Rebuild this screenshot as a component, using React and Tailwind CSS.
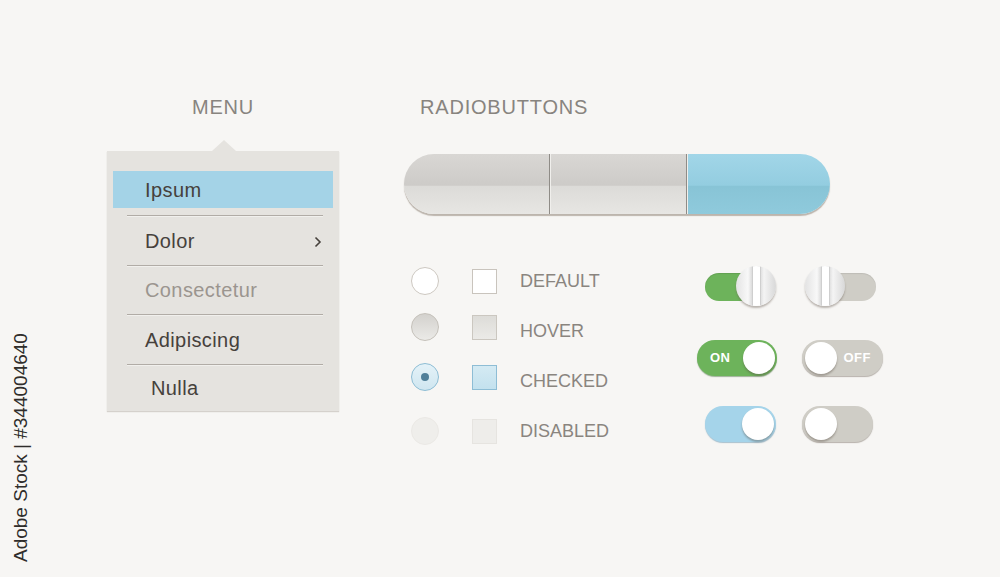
import React from 'react';

const font = { fontFamily: '"Liberation Sans", Arial, sans-serif' };

const menuItems = [
  { label: 'Dolor', arrow: true },
  { label: 'Consectetur', muted: true },
  { label: 'Adipiscing' },
  { label: 'Nulla', last: true },
];

const Separator = () => (
  <div className="ml-[20px] mr-[16px]">
    <div className="h-px bg-[#b1aca6]" />
    <div className="h-px bg-[#f1f0ed]" />
  </div>
);

const Menu = () => (
  <div className="w-[232px] shrink-0">
    <div className="h-[24px] text-center text-[20px] leading-[24px] tracking-[0.8px] text-[#88847f]">MENU</div>
    {/* little pointer on top of the dropdown */}
    <div className="mt-[21px] flex justify-center pl-[1px]">
      <div className="h-0 w-0 border-x-[12px] border-b-[11px] border-x-transparent border-b-[#e5e3df]" />
    </div>
    <div className="bg-[#e5e3df] px-[6px] pt-[20px] shadow-[0_1px_1px_rgba(150,140,130,0.35)]">
      <div className="flex h-[37px] items-center bg-[#a4d3e7] pl-[32px] text-[20px] tracking-[0.4px] text-[#46413c]">Ipsum</div>
      <div className="h-[7px]" />
      <div className="-mx-[6px]">
        {menuItems.map((item) => (
          <div key={item.label}>
            <Separator />
            <div
              className={`flex items-center justify-between pr-[17px] text-[20px] tracking-[0.4px] ${
                item.last ? 'h-[45px] pl-[44px]' : 'h-[47.5px] pl-[38px]'
              } ${item.muted ? 'text-[#9b958f]' : 'text-[#46413c]'}`}
            >
              <span>{item.label}</span>
              {item.arrow && (
                <svg width="8" height="12" viewBox="0 0 8 12" className="mt-[2px]">
                  <polyline points="1.5,1.5 6,6 1.5,10.5" fill="none" stroke="#46413c" strokeWidth="1.6" />
                </svg>
              )}
            </div>
          </div>
        ))}
      </div>
    </div>
  </div>
);

const SegmentedBar = () => (
  <div className="flex h-[60px] w-[426px] overflow-hidden rounded-full shadow-[0_2px_1px_rgba(140,128,115,0.55)]">
    <div className="w-[145px] bg-[linear-gradient(to_bottom,#d9d7d4_0%,#cdcbc8_52%,#dcdbd8_54%,#e7e6e3_100%)]" />
    <div className="w-px bg-[#8f8c87]" />
    <div className="w-px bg-[#f0efec]" />
    <div className="w-[135px] bg-[linear-gradient(to_bottom,#d9d7d4_0%,#cdcbc8_52%,#dcdbd8_54%,#e7e6e3_100%)]" />
    <div className="w-px bg-[#8f8c87]" />
    <div className="w-px bg-[#f0efec]" />
    <div className="flex-1 bg-[linear-gradient(to_bottom,#a2d6e8_0%,#93cde0_52%,#88c4d6_54%,#8fcadc_100%)]" />
  </div>
);

const radioStyles = {
  default: 'bg-white border border-[#cdc8c1]',
  hover: 'bg-[linear-gradient(to_bottom,#d3d1cd,#ebeae7)] border border-[#c5c1ba]',
  checked: 'bg-[linear-gradient(to_bottom,#e4f2f8,#cfe6f0)] border border-[#8dbdd4]',
  disabled: 'bg-[#efeeeb] border border-[#ebe9e5]',
};

const boxStyles = {
  default: 'bg-white border border-[#c9c4bd]',
  hover: 'bg-[linear-gradient(to_bottom,#dddcd8,#ebeae7)] border border-[#cbc7c0]',
  checked: 'bg-[linear-gradient(to_bottom,#d4eaf3,#c3e1ee)] border border-[#8ebdd5]',
  disabled: 'bg-[#eeedea] border border-[#e6e4e0]',
};

const states = [
  { key: 'default', label: 'DEFAULT', shift: '' },
  { key: 'hover', label: 'HOVER', shift: '-mt-[8px]' },
  { key: 'checked', label: 'CHECKED', shift: '-mt-[8px]' },
  { key: 'disabled', label: 'DISABLED', shift: '' },
];

const StateRows = () => (
  <div className="ml-[7px] w-[286px] shrink-0">
    {states.map((s) => (
      <div key={s.key} className="flex h-[50px] items-center">
        <div className={`flex items-center ${s.shift}`}>
          <div className={`flex h-[28px] w-[28px] items-center justify-center rounded-full ${radioStyles[s.key]}`}>
            {s.key === 'checked' && <div className="h-[8px] w-[8px] rounded-full bg-[#4f7f99]" />}
          </div>
          <div className={`ml-[33px] h-[25px] w-[25px] ${boxStyles[s.key]}`} />
        </div>
        <div className="ml-[23px] text-[18px] text-[#8a857f]">{s.label}</div>
      </div>
    ))}
  </div>
);

// round knob with a raised ridge down the middle
const RidgeKnob = ({ className }) => (
  <div
    className={`absolute flex h-[40px] w-[40px] justify-center overflow-hidden rounded-full bg-[linear-gradient(to_right,#e3e3e3,#f8f8f8_30%,#d6d6d6_42%,#d6d6d6_58%,#f4f4f4_70%,#d8d8d8)] shadow-[0_2px_2px_rgba(110,100,90,0.45)] ${className}`}
  >
    <div className="h-full w-[9px] border-x border-[#cfcfcf] bg-white" />
  </div>
);

const RoundKnob = ({ className }) => (
  <div className={`absolute h-[32px] w-[32px] rounded-full bg-white shadow-[0_2px_2px_rgba(90,80,70,0.4)] ${className}`} />
);

const Toggles = () => (
  <div className="w-[190px] shrink-0 pt-[9px]">
    <div className="flex h-[44px] items-center">
      <div className="relative ml-[8px] h-[28px] w-[70px] rounded-full bg-[#6db35b] shadow-[inset_0_1px_1px_rgba(0,0,0,0.1)]">
        <RidgeKnob className="left-[31px] -top-[7px]" />
      </div>
      <div className="relative ml-[31px] h-[28px] w-[70px] rounded-full bg-[#cfcdc6] shadow-[inset_0_1px_1px_rgba(0,0,0,0.08)]">
        <RidgeKnob className="-left-[1px] -top-[7px]" />
      </div>
    </div>

    <div className="mt-[27px] flex h-[44px] items-center">
      <div className="relative flex h-[36px] w-[80px] items-center rounded-full bg-[#6db35b] pl-[13px] shadow-[0_1px_1px_rgba(70,110,60,0.5)]">
        <span className="text-[13px] font-bold tracking-[0.5px] text-white">ON</span>
        <RoundKnob className="left-[46px] top-[2px]" />
      </div>
      <div className="relative ml-[25px] flex h-[36px] w-[81px] items-center justify-end rounded-full bg-[#cfcdc6] pr-[12px] shadow-[0_1px_1px_rgba(120,110,100,0.5)]">
        <span className="text-[13px] font-bold tracking-[0.5px] text-white">OFF</span>
        <RoundKnob className="left-[3px] top-[2px]" />
      </div>
    </div>

    <div className="mt-[22px] flex h-[44px] items-center">
      <div className="relative ml-[8px] h-[36px] w-[71px] rounded-full bg-[#a5d4ea] shadow-[0_1px_1px_rgba(90,140,170,0.5)]">
        <RoundKnob className="left-[37px] top-[2px]" />
      </div>
      <div className="relative ml-[26px] h-[36px] w-[71px] rounded-full bg-[#cfcdc6] shadow-[0_1px_1px_rgba(120,110,100,0.5)]">
        <RoundKnob className="left-[3px] top-[2px]" />
      </div>
    </div>
  </div>
);

export default function App() {
  return (
    <div className="relative h-[577px] w-[1000px] overflow-hidden bg-[#f7f6f4]" style={font}>
      <div className="flex pl-[107px] pt-[95px]">
        <Menu />
        <div className="ml-[65px] w-[426px] shrink-0">
          <div className="h-[24px] pl-[16px] text-[20px] leading-[24px] tracking-[0.8px] text-[#88847f]">RADIOBUTTONS</div>
          <div className="mt-[35px]">
            <SegmentedBar />
          </div>
          <div className="mt-[42px] flex">
            <StateRows />
            <Toggles />
          </div>
        </div>
      </div>

      <div className="absolute left-[10px] top-[562px] origin-top-left -rotate-90 whitespace-nowrap text-[19px] leading-[22px] text-[#2f2d2b]">
        Adobe Stock | #344004640
      </div>
    </div>
  );
}
